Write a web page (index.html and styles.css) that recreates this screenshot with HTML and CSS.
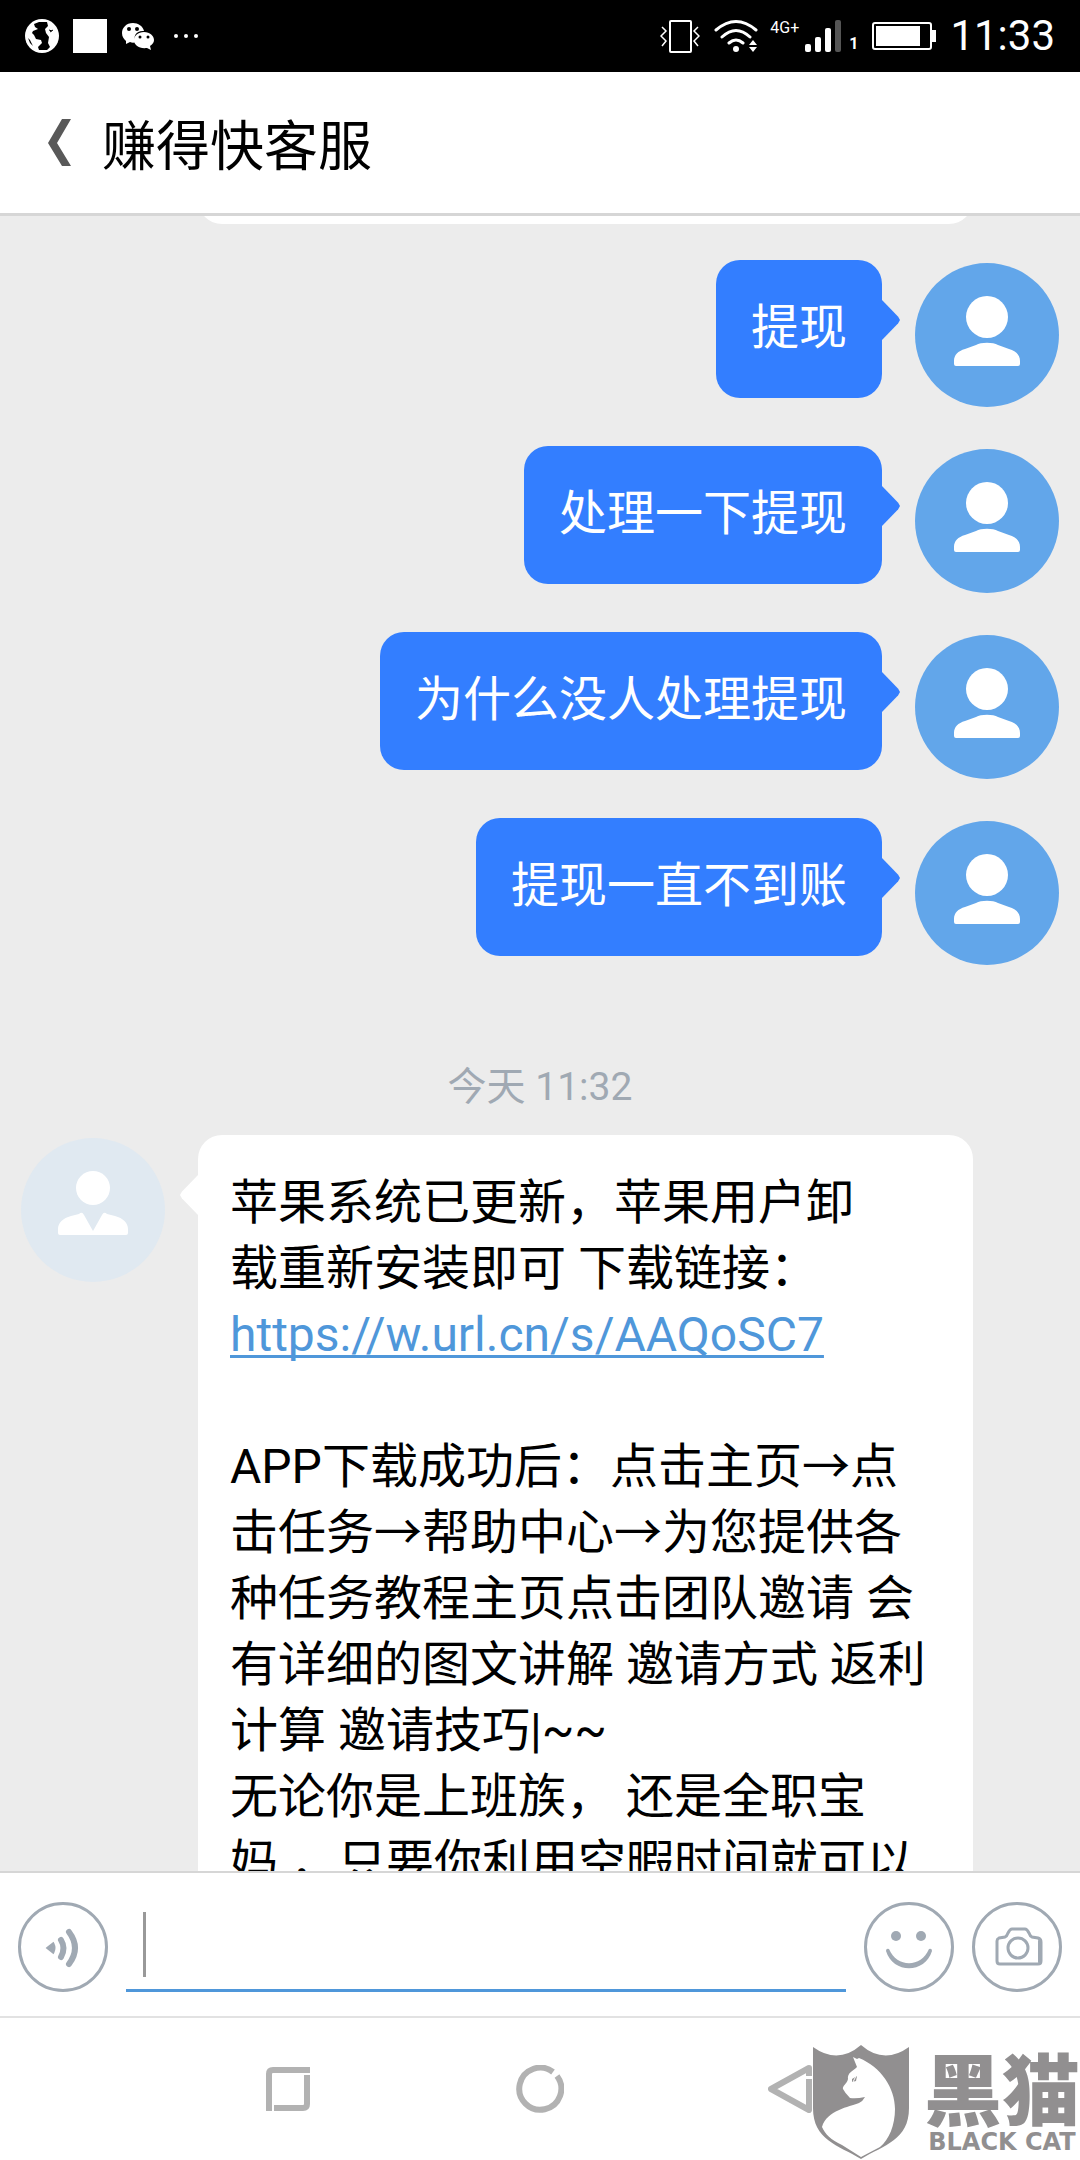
FILE: index.html
```
<!DOCTYPE html>
<html lang="zh-CN">
<head>
    <meta charset="UTF-8">
    <meta name="viewport" content="width=device-width, initial-scale=1.0">
    <title>赚得快客服</title>
    <link rel="stylesheet" href="styles.css">
</head>
<body>
    <!-- shared avatar icons -->
    <svg class="sprite" aria-hidden="true">
        <symbol id="icon-user" viewBox="0 0 144 144">
            <circle cx="72" cy="54" r="21"/>
            <path d="M39 101V98C39 92 43 88 50 86L61 82C66 79 78 79 83 82L94 86C101 88 105 92 105 98V101Q105 103 103 103H41Q39 103 39 101Z"/>
        </symbol>
        <symbol id="icon-agent" viewBox="0 0 144 144">
            <circle cx="72" cy="50" r="17"/>
            <path d="M37 95V91C37 85 42 80 50 78L58 76Q61 73 63 77L72 93L81 77Q83 73 86 76L94 78C102 80 107 85 107 91V95Q107 97 105 97H39Q37 97 37 95Z"/>
        </symbol>
    </svg>

    <div class="status-bar">
        <svg width="34" height="34" viewBox="0 0 34 34">
            <circle cx="17" cy="17" r="17" fill="#fff"/>
            <path d="M9 5L14 3L22 3L23 7L20 10L21 14L24 18L23 24L25 28L22 31L14 31L13 28L17 24L16 21L11 20L9 16L7 14L8 12L13 10L10 8ZM3 19L5 21L8 27L5 24Z"/>
            <path d="M24 11l3 1M25 13l3-2" stroke="#000" fill="none"/>
        </svg>
        <span class="status-square"></span>
        <svg width="34" height="34" viewBox="0 0 34 34" fill="#fff">
            <path d="M12 4C5 4 1 9 1 14C1 18 3 20 5 22L5 25L9 23C11 24 13 24 15 23C11 17 16 11 23 12C22 7 17 4 12 4Z"/>
            <path d="M23 13C17 13 13 17 13 21C13 26 18 30 26 29L30 31L29 27C32 25 33 23 33 21C33 17 29 13 23 13Z"/>
            <g fill="#000"><circle cx="8" cy="10" r="2"/><circle cx="16" cy="10" r="2"/><circle cx="19" cy="18" r="1.5"/><circle cx="27" cy="18" r="1.5"/></g>
        </svg>
        <svg width="34" height="34" viewBox="0 0 34 34" fill="#fff">
            <circle cx="7" cy="17" r="2"/><circle cx="17" cy="17" r="2"/><circle cx="27" cy="17" r="2"/>
        </svg>
        <div class="status-right">
            <svg width="40" height="34" viewBox="0 0 40 34" fill="none" stroke="#fff" stroke-width="2">
                <rect x="10" y="2" width="21" height="31" rx="1"/>
                <path d="M2 8L6 12L1 17L6 22L2 27M38 8L34 12L39 17L34 22L38 27" stroke-width="1.5"/>
            </svg>
            <svg width="44" height="34" viewBox="0 0 44 34" fill="none" stroke="#fff" stroke-width="3" stroke-linecap="round">
                <path d="M2 11Q22-6 42 11M8 18Q22 5 36 18M15 24Q22 18 29 24"/>
                <circle cx="22" cy="30" r="3" fill="#fff" stroke="none"/>
                <path d="M35 26L39 21L43 26ZM35 28L39 33L43 28Z" fill="#fff" stroke="none"/>
            </svg>
            <span class="network">4G+</span>
            <svg width="36" height="34" viewBox="0 0 36 34" fill="#fff">
                <rect x="0" y="25" width="6" height="8" rx="2"/>
                <rect x="10" y="18" width="6" height="15" rx="2"/>
                <rect x="20" y="9" width="6" height="24" rx="2"/>
                <rect x="30" y="1" width="6" height="32" rx="2" fill="#555"/>
            </svg>
            <span class="sim">1</span>
            <svg width="64" height="34" viewBox="0 0 64 34">
                <rect x="1" y="4" width="58" height="26" rx="2" fill="none" stroke="#fff" stroke-width="2"/>
                <path d="M4 7H48V27H4ZM60 11H64V23H60Z" fill="#fff"/>
            </svg>
            <span class="clock">11:33</span>
        </div>
    </div>

    <header class="title-bar">
        <button class="back" aria-label="返回">
            <svg width="24" height="48" viewBox="0 0 24 48"><path d="M14 0H23L9 24L23 47H14L0 24Z" fill="#595959"/></svg>
        </button>
        <h1>赚得快客服</h1>
    </header>

    <main class="chat">
        <div class="message received">
            <div class="bubble scrolled"></div>
        </div>
        <div class="message sent">
            <div class="bubble">提现</div>
            <svg class="avatar"><use href="#icon-user"/></svg>
        </div>
        <div class="message sent">
            <div class="bubble">处理一下提现</div>
            <svg class="avatar"><use href="#icon-user"/></svg>
        </div>
        <div class="message sent">
            <div class="bubble">为什么没人处理提现</div>
            <svg class="avatar"><use href="#icon-user"/></svg>
        </div>
        <div class="message sent">
            <div class="bubble">提现一直不到账</div>
            <svg class="avatar"><use href="#icon-user"/></svg>
        </div>
        <p class="time">今天 11:32</p>
        <div class="message received">
            <svg class="avatar"><use href="#icon-agent"/></svg>
            <div class="bubble">
                苹果系统已更新，苹果用户卸<br>
                载重新安装即可 下载链接：<br>
                <a href="https://w.url.cn/s/AAQoSC7">https://w.url.cn/s/AAQoSC7</a><br>
                <br>
                APP下载成功后：点击主页→点<br>
                击任务→帮助中心→为您提供各<br>
                种任务教程主页点击团队邀请 会<br>
                有详细的图文讲解 邀请方式 返利<br>
                计算 邀请技巧|~~<br>
                无论你是上班族， 还是全职宝<br>
                妈 ，只要你利用空暇时间就可以
            </div>
        </div>
    </main>

    <form class="composer">
        <button type="button" class="round" aria-label="语音">
            <svg viewBox="0 0 90 90">
                <path d="M30 46L35 42Q37 46 35 50Z" fill="#a0a9b3"/>
                <path d="M43 38Q48 46 43 55M51 30Q63 46 51 62" stroke-width="6"/>
            </svg>
        </button>
        <input class="message-input" type="text" aria-label="输入消息">
        <button type="button" class="round" aria-label="表情">
            <svg viewBox="0 0 90 90">
                <g fill="#a0a9b3" stroke="none">
                    <circle cx="32" cy="34" r="5"/><circle cx="57" cy="34" r="5"/>
                    <path d="M22 49Q22 46 25 47C33 66 57 66 65 47Q68 46 68 49C61 72 29 72 22 49Z"/>
                </g>
            </svg>
        </button>
        <button type="button" class="round" aria-label="拍照">
            <svg viewBox="0 0 90 90">
                <path d="M27 36L33 35Q35 34 36 31Q38 27 40 27H53Q55 27 57 31Q58 34 60 35L66 36Q69 37 69 40V59Q69 62 66 62H28Q25 62 25 59V39Q25 37 27 36Z"/>
                <path d="M68 39V60" stroke-width="4"/>
                <circle cx="46" cy="46" r="10"/>
            </svg>
        </button>
    </form>

    <nav class="nav-bar">
        <button aria-label="最近任务">
            <svg viewBox="0 0 48 48"><path d="M5 46V9Q5 5 9 5H46M43 10V39Q43 43 39 43H10"/></svg>
        </button>
        <button aria-label="主页">
            <svg viewBox="0 0 48 48"><path d="M37 7A21 21 0 1 0 41 11"/></svg>
        </button>
        <button aria-label="返回">
            <svg viewBox="0 0 48 48"><path d="M41 11V3L3 24L41 45V14" stroke-linejoin="round"/></svg>
        </button>
    </nav>

    <div class="watermark">
        <svg width="98" height="116" viewBox="0 0 98 116">
            <path d="M1 3Q26 21 49 1Q72 21 97 3V64C97 96 72 101 49 115C26 101 1 96 1 64Z" fill="#918f90"/>
            <path d="M41 13L45 15L47 14C69 23 83 44 83 65C83 81 77 96 68 103L49 113L30 101C19 96 13 90 10 83C15 66 37 63 47 59Q51 57 53 53Q44 55 38 54Q33 49 31 45C30 42 35 40 36 35C35 29 41 27 45 23Z" fill="#fff"/>
            <path d="M40 35L45 32L44 37L40 38Z" fill="#918f90"/>
            <path d="M41 38L44 32" stroke="#fff"/>
        </svg>
        <div class="watermark-text">
            <span class="watermark-cn">黑猫</span>
            <span class="watermark-en">BLACK CAT</span>
        </div>
    </div>
</body>
</html>
```

FILE: styles.css
```
:root {
    --chat-bg: #ececec;
    --sent: #337eff;
    --link: #4f97da;
    --muted: #a0a9b3;
    --nav-icon: #b2b2b2;
    --watermark: #918f90;
}
* {
    box-sizing: border-box;
}
body {
    margin: 0;
    height: 100vh;
    display: flex;
    flex-direction: column;
    position: relative;
    overflow: hidden;
    background: #fff;
    color: #000;
    font-family: Roboto, "Noto Sans CJK SC", sans-serif;
}
button {
    padding: 0;
    border: 0;
    background: none;
}
svg {
    display: block;
    flex: none;
}
.sprite {
    position: absolute;
    width: 0;
    height: 0;
}

/* system status bar */
.status-bar {
    flex: none;
    height: 72px;
    padding: 0 25px;
    display: flex;
    align-items: center;
    gap: 14px;
    background: #000;
    color: #fff;
}
.status-square {
    width: 34px;
    height: 34px;
    background: #fff;
}
.status-right {
    margin-left: auto;
    display: flex;
    align-items: center;
    gap: 14px;
}
.network {
    margin: 0 -8px 16px -2px;
    font-size: 16px;
    line-height: 16px;
}
.sim {
    margin: 16px 0 0 -6px;
    font-size: 16px;
    line-height: 16px;
    font-weight: bold;
}
.clock {
    font-size: 42px;
    line-height: 48px;
}

/* header */
.title-bar {
    flex: none;
    height: 144px;
    padding: 0 48px;
    display: flex;
    align-items: center;
    gap: 30px;
    border-bottom: 3px solid #d6d6d6;
}
.title-bar h1 {
    margin: 0;
    font-size: 54px;
    font-weight: normal;
}

/* conversation */
.chat {
    flex: 1;
    min-height: 0;
    overflow: hidden;
    background: var(--chat-bg);
}
.message {
    display: flex;
    align-items: flex-start;
    gap: 33px;
    padding: 0 21px;
    margin-bottom: 36px;
}
.sent {
    justify-content: flex-end;
}
.avatar {
    width: 144px;
    height: 144px;
    margin: 3px 0;
    border-radius: 50%;
    fill: #fff;
    background: #62a6ea;
}
.received .avatar {
    background: #e0e9f1;
}
.bubble {
    position: relative;
    font-size: 48px;
    line-height: 66px;
    border-radius: 24px;
}
.bubble::after {
    content: "";
    position: absolute;
    top: 40px;
    width: 18px;
    height: 40px;
    background: inherit;
}
.sent .bubble {
    padding: 35px 35px 37px;
    color: #fff;
    background: var(--sent);
}
.sent .bubble::after {
    left: 100%;
    clip-path: polygon(0 0, 90% 42%, 100% 50%, 90% 58%, 0 100%);
}
.received .bubble {
    flex: 1;
    margin-right: 86px;
    padding: 35px 32px;
    background: #fff;
}
.received .bubble::after {
    right: 100%;
    clip-path: polygon(100% 0, 10% 42%, 0 50%, 10% 58%, 100% 100%);
}
.bubble a {
    color: var(--link);
    text-decoration-thickness: 3px;
    text-underline-offset: 4px;
    text-decoration-skip-ink: none;
}
/* end of an older message, mostly scrolled out of view */
.received .scrolled {
    margin: -62px 86px 0 177px;
}
.received .scrolled::after {
    display: none;
}
.time {
    margin: 95px 0 24px;
    font-size: 39px;
    line-height: 48px;
    text-align: center;
    color: var(--muted);
}

/* message composer */
.composer {
    flex: none;
    display: flex;
    gap: 18px;
    padding: 29px 18px 24px;
    border-top: 2px solid #d6d6d6;
}
.round {
    flex: none;
    width: 90px;
    height: 90px;
    border: 3px solid var(--muted);
    border-radius: 50%;
}
.round svg {
    margin: -3px;
    fill: none;
    stroke: var(--muted);
    stroke-width: 3px;
    stroke-linecap: round;
}
.message-input {
    flex: 1;
    min-width: 0;
    height: 90px;
    padding: 0 17px;
    border: 0;
    border-bottom: 3px solid var(--link);
    outline: 0;
    font: inherit;
    font-size: 48px;
    background: linear-gradient(#999, #999) no-repeat 17px 10px / 3px 65px;
}

/* navigation bar */
.nav-bar {
    flex: none;
    height: 144px;
    display: flex;
    align-items: center;
    justify-content: center;
    gap: 204px;
    border-top: 2px solid #e2e2e2;
}
.nav-bar svg {
    width: 48px;
    height: 48px;
    fill: none;
    stroke: var(--nav-icon);
    stroke-width: 6px;
}

/* logo laid over the bottom corner */
.watermark {
    position: absolute;
    right: 0;
    bottom: 0;
    display: flex;
    align-items: center;
    gap: 14px;
    color: var(--watermark);
}
.watermark-text {
    display: flex;
    flex-direction: column;
    align-items: center;
}
.watermark-cn {
    font-family: "Noto Sans CJK SC", sans-serif;
    font-size: 78px;
    line-height: 80px;
    font-weight: 900;
}
.watermark-en {
    font-family: "DejaVu Sans", sans-serif;
    font-size: 24px;
    line-height: 32px;
    font-weight: bold;
}
```
